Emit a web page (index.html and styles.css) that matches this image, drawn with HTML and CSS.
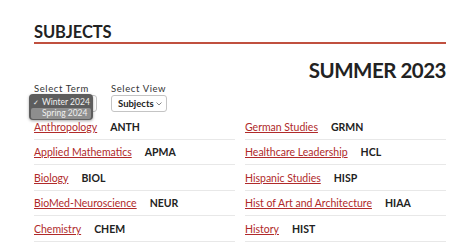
FILE: index.html
```html
<!DOCTYPE html>
<html lang="en">
<head>
<meta charset="UTF-8" />
<title>Subjects</title>
<link rel="stylesheet" href="styles.css">
</head>
<body>

<main class="page">
  <h1 class="page-title">SUBJECTS</h1>
  <h2 class="term-title">SUMMER 2023</h2>

  <div class="filters">
    <div class="filter">
      <label class="filter-label">Select Term</label>
      <div class="select select-term"></div>
      <ul class="term-menu">
        <li class="term-option"><span class="check">&#10003;</span>Winter 2024</li>
        <li class="term-option active">Spring 2024</li>
      </ul>
    </div>
    <div class="filter">
      <label class="filter-label">Select View</label>
      <div class="select select-view">Subjects
        <svg class="chev" width="6" height="4" viewBox="0 0 6 4"><path d="M0.5 0.5 L3 3 L5.5 0.5" fill="none" stroke="#777" stroke-width="0.9"/></svg>
      </div>
    </div>
  </div>

  <div class="subjects">
    <div class="subject"><a href="#">Anthropology</a><span class="code">ANTH</span></div>
    <div class="subject"><a href="#">German Studies</a><span class="code">GRMN</span></div>
    <div class="subject"><a href="#">Applied Mathematics</a><span class="code">APMA</span></div>
    <div class="subject"><a href="#">Healthcare Leadership</a><span class="code">HCL</span></div>
    <div class="subject"><a href="#">Biology</a><span class="code">BIOL</span></div>
    <div class="subject"><a href="#">Hispanic Studies</a><span class="code">HISP</span></div>
    <div class="subject"><a href="#">BioMed-Neuroscience</a><span class="code">NEUR</span></div>
    <div class="subject"><a href="#">Hist of Art and Architecture</a><span class="code">HIAA</span></div>
    <div class="subject"><a href="#">Chemistry</a><span class="code">CHEM</span></div>
    <div class="subject"><a href="#">History</a><span class="code">HIST</span></div>
  </div>
</main>

</body>
</html>
```

FILE: styles.css
```css
body { margin: 0; background: #fff; color: #222; font-family: Lato, "Open Sans", sans-serif; }
.page { width: 412px; margin-left: 34px; padding-top: 23px; }

.page-title { font-size: 16.5px; font-weight: 700; margin: 0; line-height: 18px; padding-bottom: 1px; border-bottom: 2px solid #c0503f; color: #222; letter-spacing: -0.1px; }
.term-title { font-size: 20.5px; font-weight: 700; margin: 15px 0 0; line-height: 22px; text-align: right; color: #222; letter-spacing: -0.5px; }

.filters { display: flex; gap: 14px; margin-top: 2px; }
.filter { position: relative; display: flex; flex-direction: column; }
.filter-label { font-size: 9.5px; letter-spacing: 0.6px; color: #333; line-height: 11px; }
.select { margin-top: 1px; height: 17px; box-sizing: border-box; border: 1px solid #c4c4c4; border-radius: 3px; font-size: 9.5px; font-weight: 700; line-height: 15px; padding: 0 4px 0 6px; display: flex; align-items: center; justify-content: space-between; background: #fff; }
.select-term { width: 64px; margin-left: -1px; }
.select-view { width: 56px; }
.chev { flex: none; }

.term-menu { position: absolute; left: -5px; top: 11px; width: 64px; box-sizing: border-box; margin: 0; padding: 3px 2px 1px; list-style: none; background: #5d5d5d; border-radius: 4px; box-shadow: 0 1px 3px rgba(0,0,0,0.35); }
.term-option { font-size: 8.5px; color: #f0f0f0; line-height: 11px; padding: 0 0 0 11px; position: relative; border-radius: 2px; white-space: nowrap; }
.term-option.active { background: #8e8e8e; }
.check { position: absolute; left: 2px; font-size: 7px; }

.subjects { display: grid; grid-template-columns: 201px 201px; column-gap: 10px; margin-top: 2px; }
.subject { display: flex; align-items: center; gap: 13px; height: 25.5px; box-sizing: border-box; border-bottom: 1px solid #e8e8e8; font-size: 10.5px; padding-top: 1px; }
.subject a { color: #b02a2a; text-decoration: underline; }
.code { font-weight: 700; color: #222; }
```
